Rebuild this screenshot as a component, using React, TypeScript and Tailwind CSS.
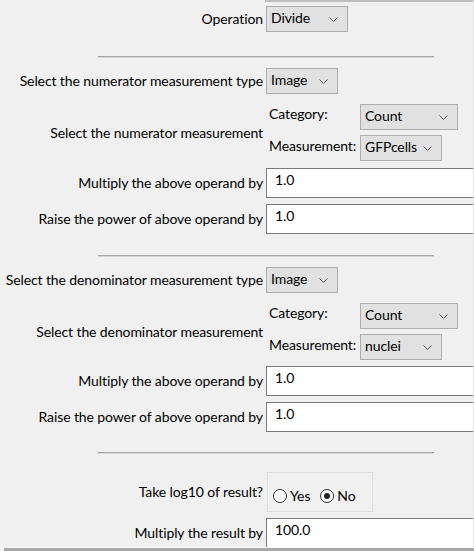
import React from "react";

const font = { fontFamily: 'Lato, "Open Sans", sans-serif', letterSpacing: "-0.1px" };

function Chevron() {
  return (
    <svg width="9" height="5" viewBox="0 0 9 5" className="shrink-0">
      <path d="M0.5 0.5 L4.5 4.5 L8.5 0.5" fill="none" stroke="#555" strokeWidth="1" />
    </svg>
  );
}

function Select({ value, w }: { value: string; w: string }) {
  return (
    <div
      className={`${w} h-[26px] flex items-center justify-between pl-[4px] pr-[9px] bg-[#e1e1e1] border border-[#adadad] text-[14px] text-black whitespace-nowrap`}
    >
      <span className="leading-none -mt-[2px]">{value}</span>
      <Chevron />
    </div>
  );
}

function Label({ children }: { children: React.ReactNode }) {
  return (
    <div className="w-[264px] shrink-0 pr-[1px] text-right text-[14px] text-black leading-none whitespace-nowrap">
      {children}
    </div>
  );
}

function Sep() {
  return (
    <div className="ml-[98px] w-[336px] flex flex-col">
      <div className="h-px bg-[#a6a6a6]" />
      <div className="h-px bg-[#d6d6d6]" />
    </div>
  );
}

function TextRow({ label, value, mt }: { label: string; value: string; mt: string }) {
  return (
    <div className={`flex items-center ${mt} h-[30px]`}>
      <Label>{label}</Label>
      <div className="ml-[2px] flex-1 h-[30px] bg-white border border-[#7a7a7a] border-r-0 pl-[8px] pt-[4px] text-[14px] text-black leading-none">
        {value}
      </div>
    </div>
  );
}

function MeasBlock({ label, meas, mt }: { label: string; meas: string; mt: string }) {
  return (
    <div className={`flex items-center ${mt}`}>
      <Label>{label}</Label>
      <div className="ml-[2px] flex flex-col gap-[5px]">
        <div className="flex items-center h-[26px]">
          <div className="w-[94px] shrink-0 pl-[3px] -mt-[7px] text-[14px] text-black leading-none whitespace-nowrap">Category:</div>
          <Select value="Count" w="w-[98px]" />
        </div>
        <div className="flex items-center h-[26px]">
          <div className="w-[94px] shrink-0 pl-[3px] -mt-[4px] text-[14px] text-black leading-none whitespace-nowrap">Measurement:</div>
          <Select value={meas} w="w-[82px]" />
        </div>
      </div>
    </div>
  );
}

function Radio({ checked, label }: { checked: boolean; label: string }) {
  return (
    <div className="flex items-center gap-[3px]">
      <div className="w-[14px] h-[14px] rounded-full border border-[#333] bg-white flex items-center justify-center">
        {checked && <div className="w-[6px] h-[6px] rounded-full bg-[#222]" />}
      </div>
      <span className="text-[14px] text-black leading-none">{label}</span>
    </div>
  );
}

export default function App() {
  return (
    <div className="w-[474px] h-[551px] bg-[#f0f0f0] overflow-hidden flex flex-col" style={font}>
      <div className="h-[547px] overflow-hidden flex flex-col border-r border-[#e6e6e6]">
        <div className="ml-[265px] h-[3px] border-b-2 border-[#bdbdbd] bg-[#ececec]" />
        <div className="flex items-center mt-[4px] h-[26px]">
          <Label>Operation</Label>
          <div className="ml-[2px]">
            <Select value="Divide" w="w-[82px]" />
          </div>
        </div>
        <div className="mt-[24px]">
          <Sep />
        </div>
        <div className="flex items-center mt-[10px] h-[26px]">
          <Label>Select the numerator measurement type</Label>
          <div className="ml-[2px]">
            <Select value="Image" w="w-[72px]" />
          </div>
        </div>
        <MeasBlock label="Select the numerator measurement" meas="GFPcells" mt="mt-[10px]" />
        <TextRow label="Multiply the above operand by" value="1.0" mt="mt-[7px]" />
        <TextRow label="Raise the power of above operand by" value="1.0" mt="mt-[6px]" />
        <div className="mt-[21px]">
          <Sep />
        </div>
        <div className="flex items-center mt-[10px] h-[26px]">
          <Label>Select the denominator measurement type</Label>
          <div className="ml-[2px]">
            <Select value="Image" w="w-[72px]" />
          </div>
        </div>
        <MeasBlock label="Select the denominator measurement" meas="nuclei" mt="mt-[10px]" />
        <TextRow label="Multiply the above operand by" value="1.0" mt="mt-[6px]" />
        <TextRow label="Raise the power of above operand by" value="1.0" mt="mt-[6px]" />
        <div className="mt-[20px]">
          <Sep />
        </div>
        <div className="flex items-center mt-[18px] h-[40px]">
          <Label>Take log10 of result?</Label>
          <div className="ml-[3px] w-[106px] h-[40px] border border-[#dcdcdc] flex items-center gap-[10px] pl-[5px] pt-[8px]">
            <Radio checked={false} label="Yes" />
            <Radio checked={true} label="No" />
          </div>
        </div>
        <TextRow label="Multiply the result by" value="100.0" mt="mt-[6px]" />
      </div>
      <div className="h-px bg-[#fafafa]" />
      <div className="ml-[4px] h-[3px] bg-[#a9a9a9]" />
    </div>
  );
}
